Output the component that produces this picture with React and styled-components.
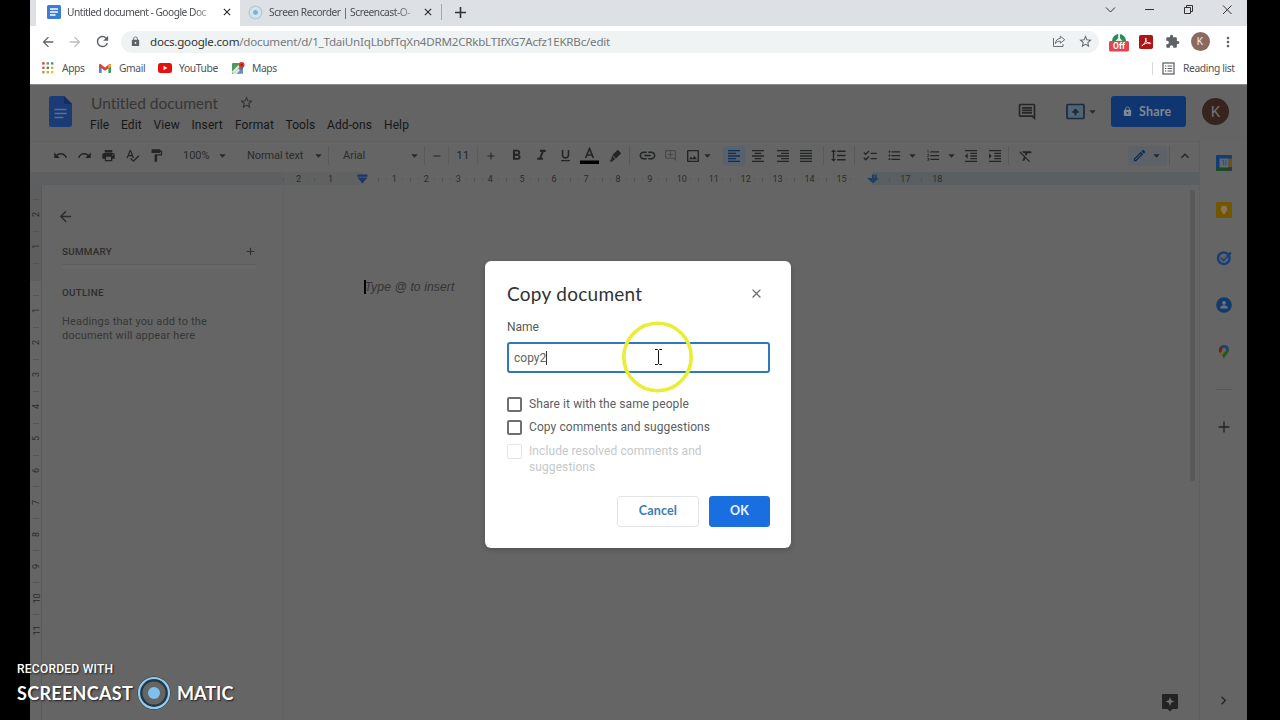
import React from "react"
import styled, { createGlobalStyle, css } from "styled-components"
import {
    MdUndo,
    MdRedo,
    MdPrint,
    MdSpellcheck,
    MdFormatPaint,
    MdRemove,
    MdAdd,
    MdFormatBold,
    MdFormatItalic,
    MdFormatUnderlined,
    MdLink,
    MdOutlineAddComment,
    MdOutlineImage,
    MdFormatAlignLeft,
    MdFormatAlignCenter,
    MdFormatAlignRight,
    MdFormatAlignJustify,
    MdFormatLineSpacing,
    MdChecklist,
    MdFormatListBulleted,
    MdFormatListNumbered,
    MdFormatIndentDecrease,
    MdFormatIndentIncrease,
    MdFormatClear,
    MdOutlineEdit,
    MdKeyboardArrowUp,
    MdChevronRight,
    MdOutlineComment,
    MdLock,
    MdStarBorder,
    MdArrowBack,
    MdArrowForward,
    MdRefresh,
    MdExtension,
    MdMoreVert,
    MdClose
} from "react-icons/md"

const GlobalStyle = createGlobalStyle`
    body {
        margin: 0;
        background: #000;
        overflow: hidden;
    }

    * {
        box-sizing: border-box;
    }

    svg {
        display: block;
        flex-shrink: 0;
    }
`

const Screen = styled.div`
    position: relative;
    width: 1280px;
    height: 720px;
    overflow: hidden;
    background: #000;
    padding-left: 30px;
    font-family: Roboto, sans-serif;
`

const Window = styled.div`
    width: 1217px;
    height: 720px;
    display: flex;
    flex-direction: column;
    background: #656565;
    white-space: nowrap;
`

// every bar is a run of these, icon or label in the middle
const Slot = styled.div`
    width: ${props => props.$w}px;
    height: 100%;
    padding-left: ${props => props.$pad || 0}px;
    flex-shrink: 0;
    display: flex;
    align-items: center;
    justify-content: center;
`

const Grow = styled.div`
    flex-grow: 1;
`

/* ---------- browser ---------- */

const TabStrip = styled.div`
    height: 26px;
    display: flex;
    background: #dde1e5;
    padding-left: 6px;
    color: #3c4043;
`

const Tab = styled.div`
    width: ${props => props.$w}px;
    height: 26px;
    padding-bottom: 2px;
    display: flex;
    align-items: center;
    ${props =>
        props.$active &&
        css`
            background: #fff;
        `};
`

const TabTitle = styled.div`
    width: 147px;
    font-family: "Noto Sans", sans-serif;
    font-size: 10.2px;
    line-height: 20px;
    letter-spacing: ${props => props.$spacing}px;
    color: #4a4d51;
    mask-image: linear-gradient(to right, #000 86%, rgba(0, 0, 0, 0.2));
`

const TabLine = styled.div`
    width: 1px;
    height: 16px;
    margin-top: 4px;
    background: #a5a9ae;
`

const NewTab = styled(Slot)`
    height: 24px;
`

const AddressBar = styled.div`
    height: 31px;
    display: flex;
    align-items: center;
    background: #fff;
    padding-left: 5px;
    color: #5f6368;
`

const Omnibox = styled.div`
    width: 979px;
    height: 22px;
    border-radius: 11px;
    background: #f0f3f3;
    display: flex;
    align-items: center;
    padding-left: 7px;
`

const Url = styled.div`
    flex-grow: 1;
    font-family: "Noto Sans", sans-serif;
    font-size: 11.6px;
    line-height: 20px;
    letter-spacing: -0.23px;
    color: #75797c;

    b {
        font-weight: 400;
        color: #303336;
    }
`

const BrowserAvatar = styled.div`
    width: 19px;
    height: 19px;
    flex-shrink: 0;
    border-radius: 50%;
    background: #8a6a60;
    color: #f0e6e2;
    font-size: 10px;
    line-height: 19px;
    text-align: center;
`

const BookmarkBar = styled.div`
    height: 27px;
    padding-bottom: 5px;
    display: flex;
    align-items: center;
    background: #fff;
    padding-left: 8px;
`

const BookmarkText = styled.div`
    width: ${props => props.$w}px;
    font-family: "Noto Sans", sans-serif;
    font-size: 10.3px;
    line-height: 20px;
    letter-spacing: -0.4px;
    color: #505357;
`

const BookmarkLine = styled.div`
    width: 1px;
    height: 13px;
    background: #d6d9dc;
`

/* ---------- docs ---------- */

const DocsHeader = styled.div`
    height: 57px;
    border-top: 1px solid #8b8b8b;
    display: flex;
    background: #646464;
    padding-left: 19px;
`

const LogoSlot = styled(Slot)`
    height: 53px;
`

const HeaderMain = styled.div`
    width: 900px;
    padding: 7px 0 0 18px;
`

const TitleRow = styled.div`
    display: flex;
    align-items: center;
    height: 22px;
    padding-bottom: 1px;
    color: #303030;
`

const DocTitle = styled.div`
    width: 149px;
    padding-left: 1px;
    font-family: Lato, sans-serif;
    font-size: 15.5px;
    letter-spacing: -0.03px;
    color: #363636;
`

const MenuRow = styled.div`
    display: flex;
    height: 22px;
    align-items: center;
`

const MenuItem = styled.div`
    width: ${props => props.$w}px;
    font-size: 12px;
    letter-spacing: 0.1px;
    color: #161616;
`

const HeaderActions = styled.div`
    display: flex;
    align-items: center;
    height: 53px;
    color: #242628;
`

const ShareButton = styled.div`
    width: 75px;
    height: 31px;
    margin: 0 16px 0 17px;
    border-radius: 3px;
    background: #103672;
    color: #81878f;
    display: flex;
    align-items: center;
    padding: 0 0 1px 11px;
    gap: 6px;
    font-family: Lato, sans-serif;
    font-weight: 700;
    font-size: 12.5px;
    letter-spacing: 0.2px;
`

const Avatar = styled.div`
    width: 27px;
    height: 27px;
    border-radius: 50%;
    background: #35241f;
    color: #77706d;
    font-size: 15px;
    line-height: 28px;
    text-align: center;
`

const Lower = styled.div`
    flex-grow: 1;
    display: flex;
`

const Workspace = styled.div`
    width: 1169px;
    display: flex;
    flex-direction: column;
`

const Toolbar = styled.div`
    height: 31px;
    display: flex;
    align-items: center;
    border-top: 1px solid #5e5e5e;
    padding: 0 0 3px 18px;
    color: #232425;
`

const ToolText = styled.div`
    width: ${props => props.$w}px;
    padding-left: ${props => props.$pad}px;
    flex-shrink: 0;
    font-size: 11px;
    letter-spacing: ${props => props.$spacing || 0}px;
    color: #2a2b2c;
`

const ToolLine = styled.div`
    width: 1px;
    height: 19px;
    margin-right: 1px;
    flex-shrink: 0;
    background: #595959;
`

const FontSize = styled(Slot)`
    height: 19px;
    font-size: 11px;
    border: 1px solid #5c5c5c;
    border-width: 0 1px;
    letter-spacing: 0.4px;
`

const SelectedSlot = styled(Slot)`
    height: 20px;
    border-radius: 2px;
    background: #59616c;
    color: #0b2c58;
`

const EditMode = styled.div`
    width: 39px;
    height: 20px;
    border-radius: 2px;
    background: #5d6268;
    display: flex;
    color: #0b2c58;
`

const Ruler = styled.div`
    height: 13px;
    display: flex;
    background: linear-gradient(
        to right,
        #5d5f60 252px,
        #606161 252px,
        #606161 332px,
        #656565 332px,
        #656565 843px,
        #5a6061 843px
    );
    padding-left: 252.5px;
`

const RulerCell = styled.div`
    width: 31.95px;
    height: 13px;
    display: flex;
    align-items: center;
    justify-content: center;
    font-size: 9px;
    color: #2b2b2b;
    background: linear-gradient(#505050, #505050) 0 6px / 1px 3px no-repeat,
        linear-gradient(#5a5a5a, #5a5a5a) 8px 6px / 1px 2px no-repeat,
        linear-gradient(#5a5a5a, #5a5a5a) 24px 6px / 1px 2px no-repeat;
`

const Marker = styled.div`
    width: 32px;
    height: 13px;
    display: flex;
    align-items: center;
    justify-content: center;
`

const Body = styled.div`
    flex-grow: 1;
    height: 535px;
    display: flex;
`

const SideRuler = styled.div`
    width: 12px;
    height: 535px;
    overflow: hidden;
    padding-top: 14px;
    border-right: 1px solid #595959;
    background: linear-gradient(#5e5e5e 96px, #656565 96px);
`

const SideRulerCell = styled.div`
    width: 11px;
    height: 31.95px;
    padding-left: 3px;
    display: flex;
    align-items: center;
    justify-content: center;
    font-size: 9px;
    line-height: 9px;
    color: #2b2b2b;
    background: linear-gradient(#555, #555) 3px 0 / 6px 1px no-repeat;

    span {
        transform: rotate(-90deg);
    }
`

const Outline = styled.div`
    width: 242px;
    border-right: 1px solid #616161;
    padding: 23px 0 0 20px;
    color: #2c2c2c;
`

const BackArrow = styled.div`
    height: 18px;
    margin-left: -5px;
`

const OutlineHead = styled.div`
    width: 195px;
    height: 20px;
    margin-top: ${props => props.$top}px;
    display: flex;
    align-items: center;
    justify-content: space-between;
    font-weight: 500;
    font-size: 9.8px;
    letter-spacing: 0.3px;
    color: #2d2d2d;
`

const OutlineLine = styled.div`
    width: 194px;
    height: 5px;
    margin-top: 3px;
    border-top: 1px solid #5d5d5d;
    background: #686868;
`

const OutlineText = styled.div`
    margin-top: 13px;
    font-size: 11px;
    line-height: 14.3px;
    letter-spacing: 0.16px;
    color: #373737;
`

const Paper = styled.div`
    width: 906px;
    padding: 95px 0 0 80px;
    display: flex;
`

const Caret = styled.div`
    width: 1.5px;
    height: 14px;
    margin-right: -1px;
    background: #000;
`

const Hint = styled.div`
    height: 15px;
    font-family: "Liberation Sans", sans-serif;
    font-style: italic;
    font-size: 12.2px;
    line-height: 15px;
    letter-spacing: 0.08px;
    color: #343434;
`

const Scroller = styled.div`
    width: 9px;
    padding-top: 5px;
`

const ScrollThumb = styled.div`
    width: 5px;
    height: 291px;
    border-radius: 2px;
    background: #595959;
`

const SidePanel = styled.div`
    width: 48px;
    border-left: 1px solid #5e5e5e;
    padding-top: 10px;
    background: #656565;
    display: flex;
    flex-direction: column;
    align-items: center;
    color: #262626;
`

const PanelIcon = styled.div`
    height: ${props => props.$h || 47.3}px;
    padding-top: 4px;
`

const PanelLine = styled.div`
    width: 16px;
    height: 1px;
    margin-top: 2px;
    background: #575757;
`

const PanelFoot = styled.div`
    margin-top: auto;
    height: 28px;
`

/* ---------- dialog ---------- */

const Dialog = styled.div`
    position: absolute;
    left: 485px;
    top: 261px;
    width: 306px;
    height: 287px;
    border-radius: 6px;
    background: #fff;
    box-shadow: 0 2px 5px rgba(0, 0, 0, 0.2);
    padding: 20px 21px 20px 22px;
    color: #45484c;
`

const DialogHead = styled.div`
    height: 25px;
    display: flex;
    align-items: center;
    justify-content: space-between;
    padding-right: 6px;
    color: #6a6e72;
`

const DialogTitle = styled.div`
    font-family: Lato, sans-serif;
    font-size: 19px;
    letter-spacing: 0.27px;
    color: #303236;
`

const Label = styled.div`
    margin-top: 13px;
    font-size: 12px;
    line-height: 16px;
    letter-spacing: 0;
    color: #55585c;
`

const Field = styled.div`
    height: 31px;
    margin-top: 7px;
    border: 2px solid #2f78bd;
    border-radius: 3px;
    display: flex;
    align-items: center;
    padding-left: 5px;
    font-size: 12px;
    color: #606367;
`

const FieldCaret = styled.div`
    width: 1px;
    height: 14px;
    background: #333;
`

const Checks = styled.div`
    margin-top: 23px;
`

const CheckRow = styled.div`
    display: flex;
    gap: 7px;
    min-height: 23.3px;
    font-size: 12px;
    line-height: 16px;
    letter-spacing: 0.09px;
    color: ${props => (props.$off ? "#c6c8ca" : "#5b5e62")};
`

const Box = styled.div`
    width: 15px;
    height: 15px;
    margin-top: 1px;
    flex-shrink: 0;
    border-radius: 2px;
    border: ${props =>
        props.$off ? "1px solid #e4e5e7" : "2px solid #6d7175"};
`

const DialogButtons = styled.div`
    display: flex;
    justify-content: flex-end;
    gap: 10px;
    margin-top: 21px;
`

const DialogButton = styled.div`
    width: ${props => props.$w}px;
    height: 31px;
    border-radius: 3px;
    display: flex;
    align-items: center;
    justify-content: center;
    padding-bottom: 1px;
    font-family: Lato, sans-serif;
    font-weight: 700;
    font-size: 12.5px;
    letter-spacing: 0.15px;
    border: 1px solid ${props => (props.$primary ? "#1a6fe0" : "#e2e4e7")};
    background: ${props => (props.$primary ? "#1a6fe0" : "#fff")};
    color: ${props => (props.$primary ? "#eef5ff" : "#3b7cae")};
`

/* ---------- recorder overlays ---------- */

const Pointer = styled.div`
    position: absolute;
    left: 620px;
    top: 320px;
`

const Watermark = styled.div`
    position: absolute;
    left: 17px;
    top: 661px;
    color: #fff;
    white-space: nowrap;
    text-shadow: 1px 1px 2px rgba(0, 0, 0, 0.75);
`

const WatermarkSmall = styled.div`
    font-size: 12px;
    font-weight: 500;
    line-height: 16px;
    letter-spacing: 0.25px;
`

const WatermarkBrand = styled.div`
    height: 32px;
    display: flex;
    align-items: center;
    font-family: Lato, sans-serif;
    font-weight: 700;
    font-size: 18px;
`

const BrandWord = styled.div`
    width: ${props => props.$w}px;
    padding-left: ${props => props.$pad || 0}px;
    letter-spacing: ${props => props.$spacing}px;
`

const DropDown = ({ w }) => (
    <Slot $w={w}>
        <svg width="7" height="4" viewBox="0 0 7 4">
            <path d="M0.3 0.3h6.4L3.5 3.7z" fill="#27282a" />
        </svg>
    </Slot>
)

const DocTabIcon = () => (
    <svg width="14" height="14" viewBox="0 0 14 14">
        <rect width="14" height="14" rx="1.5" fill="#3c7cd8" />
        <path d="M3 4h8M3 7h8M3 10h5.5" stroke="#fff" strokeWidth="1.4" />
    </svg>
)

const RecorderTabIcon = () => (
    <svg width="15" height="15" viewBox="0 0 15 15">
        <circle cx="7.5" cy="7.5" r="6.3" fill="none" stroke="#a9cde0" strokeWidth="1.3" />
        <circle cx="7.5" cy="7.5" r="2.4" fill="#72b4d8" />
    </svg>
)

const ShareArrow = () => (
    <svg width="14" height="13" viewBox="0 0 14 13" fill="none" stroke="#6a6e72">
        <path d="M1.500 3v8.500h9.500v-2.500" />
        <path d="M8.300 1.200l4.400 3.500-4.400 3.500v-2c-2.200 0-3.800.5-5 2.400.4-3 2-4.900 5-5.300z" />
    </svg>
)

const OffExtension = () => (
    <svg width="22" height="20" viewBox="0 0 22 20">
        <path d="M4 9a7 7 0 0 1 14 0z" fill="#2f8a5a" />
        <path d="M7.500 9l3.500-4 3.500 4z" fill="#d9efe2" />
        <path d="M10.200 2h1.800v6h-1.800z" fill="#e9f6ee" />
        <rect x="1" y="9" width="20" height="10.500" rx="1.500" fill="#e2454f" />
        <text
            x="11"
            y="17.4"
            textAnchor="middle"
            fill="#fff"
            fontSize="8.5"
            fontWeight="700"
            fontFamily="Roboto, sans-serif"
        >
            Off
        </text>
    </svg>
)

const PdfExtension = () => (
    <svg width="14" height="14" viewBox="0 0 14 14">
        <rect width="14" height="14" rx="1.8" fill="#b01515" />
        <path
            d="M2.800 10.800c2-1 4.600-4.200 4.300-7.400c-.5-1-1 .3-.3 2c.8 2 2.300 3.300 4.500 3.300c.8-.3.2-1-1-1c-2.500 0-5 1-7.500 3.100z"
            fill="none"
            stroke="#fff"
            strokeWidth="1"
        />
    </svg>
)

const AppsIcon = () => {
    const colors = ["#d93f35", "#5c9a5f", "#4a80c8", "#dc5c48", "#5a8f50", "#d8b23e", "#8cae3f", "#d8a838", "#e0c23e"]
    return (
        <svg width="12" height="12" viewBox="0 0 12 12">
            {colors.map((c, i) => (
                <rect key={i} x={(i % 3) * 4.4 + 0.2} y={Math.floor(i / 3) * 4.4 + 0.2} width="2.4" height="2.4" fill={c} />
            ))}
        </svg>
    )
}

const GmailIcon = () => (
    <svg width="12" height="9" viewBox="0 0 12 9">
        <path d="M0 1h2.600v8H.8A.8.800 0 0 1 0 8.200z" fill="#4a80d8" />
        <path d="M9.400 1H12v7.200a.8.800 0 0 1-.8.800H9.400z" fill="#3c9a56" />
        <path d="M0 1.200C0 0 1.300-.3 2.200.5L6 3.400 9.800.5C10.700-.3 12 0 12 1.200L11.900 2.500 6 6.800.1 2.500z" fill="#dc4436" />
        <path d="M9.400.8c1-.9 2.600-.6 2.600.6v1.200L9.400 4.500z" fill="#e8b23a" />
    </svg>
)

const YouTubeIcon = () => (
    <svg width="14" height="10" viewBox="0 0 14 10">
        <rect width="14" height="10" rx="2.5" fill="#e8100c" />
        <path d="M5.500 2.800L9.300 5 5.500 7.200z" fill="#fff" />
    </svg>
)

const MapsIcon = () => (
    <svg width="13" height="12" viewBox="0 0 13 12">
        <rect y="1" width="11" height="11" rx="1" fill="#4b9c5c" />
        <path d="M1 12l5-5.500 5 5V12z" fill="#dfe5ea" />
        <path d="M4.500 12L11 5v6.500z" fill="#5b8fd6" />
        <path d="M0 9.500L8 1.500 9.500 3 1 11.800z" fill="#f0e9d8" />
        <path d="M9.600 0a3 3 0 0 1 3 3c0 2-2.200 2.700-3 5.200C8.800 5.700 6.600 5 6.600 3a3 3 0 0 1 3-3z" fill="#d5392f" />
        <circle cx="9.6" cy="3" r="1" fill="#8a1a16" />
    </svg>
)

const ReadingListIcon = () => (
    <svg width="13" height="13" viewBox="0 0 13 13" fill="none" stroke="#55585c">
        <rect x="1" y="1" width="11" height="11" strokeWidth="1.2" />
        <path d="M3 4h1.300M3 6.500h1.300M3 9h1.300M5.500 4h4.700M5.500 6.500h4.700M5.500 9h4.700" strokeWidth="1.2" />
    </svg>
)

const DocsLogo = () => (
    <svg width="23" height="31" viewBox="0 0 23 31">
        <path d="M2.200 0H15l8 8v20.800a2.200 2.200 0 0 1-2.200 2.200H2.200A2.200 2.200 0 0 1 0 28.800V2.200A2.200 2.200 0 0 1 2.200 0z" fill="#1b3b76" />
        <path d="M15 0l8 8h-6a2 2 0 0 1-2-2z" fill="#152d5c" />
        <path d="M5.500 13.500h12M5.500 17.500h12M5.500 21.500h9" stroke="#5b6f90" strokeWidth="1.5" />
    </svg>
)

const PresentIcon = () => (
    <svg width="19" height="17" viewBox="0 0 19 17">
        <rect x="1" y="1.5" width="17" height="14" rx="1" fill="#536471" stroke="#182b44" strokeWidth="1.7" />
        <path d="M9.500 12.500v-6M6.500 9h6" fill="none" stroke="#182b44" strokeWidth="1.9" />
        <path d="M6.500 8.500l3-3 3 3z" fill="#182b44" />
    </svg>
)

const TextColorIcon = () => (
    <svg width="19" height="18" viewBox="0 0 19 18">
        <path d="M5.600 11L9.500 1.500 13.400 11M7 8h5" fill="none" stroke="#232425" strokeWidth="1.6" />
        <rect y="13.5" width="19" height="3.5" fill="#000" />
    </svg>
)

const HighlightIcon = () => (
    <svg width="13" height="13" viewBox="0 0 13 13">
        <path d="M8.800.8l3.400 3.400L7 9.600 3.400 6z" fill="#232425" />
        <path d="M3 6.800l3.200 3.200-1.600 1.300-1 1.200H.5l1.800-2.100z" fill="#232425" />
    </svg>
)

const IndentMarker = () => (
    <svg width="11" height="10" viewBox="0 0 11 10">
        <path d="M.5.5h10v2.200H.5zM.5 3.400h10L5.500 9.500z" fill="#1c3767" />
    </svg>
)

const RightMarker = () => (
    <svg width="12" height="11" viewBox="0 0 12 11">
        <path d="M0 5h12L6 10.500z" fill="#1c3f67" />
        <path d="M5 1.500l2.500-.5v5H4.800zM8 2.500l2-1.300v4H8z" fill="#24405c" />
    </svg>
)

const CalendarIcon = () => (
    <svg width="16" height="16" viewBox="0 0 16 16">
        <rect width="16" height="16" rx="1" fill="#153c73" />
        <path d="M12.500 3.500H16V12h-3.500z" fill="#69550c" />
        <path d="M0 12.500h12.500V16H1a1 1 0 0 1-1-1z" fill="#164a28" />
        <path d="M12.500 12.500H16L12.500 16z" fill="#6b2417" />
        <rect x="3.5" y="3.5" width="9" height="9" fill="#61676e" />
        <path d="M6 5.500h1.500v5M9.800 5.200v5.300" fill="none" stroke="#2b5286" />
    </svg>
)

const KeepIcon = () => (
    <svg width="16" height="16" viewBox="0 0 16 16">
        <rect width="16" height="16" rx="1" fill="#725700" />
        <circle cx="8" cy="7" r="3.2" fill="#82755a" />
        <rect x="6.5" y="9.5" width="3" height="2.5" fill="#82755a" />
    </svg>
)

const TasksIcon = () => (
    <svg width="16" height="16" viewBox="0 0 16 16" fill="none">
        <circle cx="7.8" cy="8.3" r="5.8" stroke="#183e78" strokeWidth="2.4" />
        <path d="M5 7.500l2.500 2.600L15 2.500" stroke="#183e78" strokeWidth="2.2" />
        <path d="M5 6.500l2.600 2.600 3-3" stroke="#5e6a7a" strokeWidth="1" />
    </svg>
)

const ContactsIcon = () => (
    <svg width="16" height="16" viewBox="0 0 16 16">
        <circle cx="8" cy="8" r="7.8" fill="#143a6b" />
        <circle cx="8" cy="5.8" r="1.9" fill="#68717c" />
        <path d="M4 11.500c0-2.300 2-3.200 4-3.200s4 .9 4 3.200z" fill="#68717c" />
    </svg>
)

const MapPinIcon = () => (
    <svg width="12" height="16" viewBox="0 0 12 16">
        <path d="M6 1a5 5 0 0 1 5 5c0 3.500-4 5-5 9-1-4-5-5.500-5-9a5 5 0 0 1 5-5z" fill="#1d5730" />
        <path d="M6 1a5 5 0 0 1 4.700 3.300L7 8 3 2.200A5 5 0 0 1 6 1z" fill="#20427a" />
        <path d="M3 2.200L6 6 2 9C.5 7 .3 4 3 2.200z" fill="#672720" />
        <path d="M2 9l2.500-2.500L7 8l-3 3.500z" fill="#796117" />
        <circle cx="6" cy="6" r="1.9" fill="#686868" />
    </svg>
)

const ExploreIcon = () => (
    <svg width="16" height="18" viewBox="0 0 16 18">
        <path d="M1 0h14a1 1 0 0 1 1 1v13a1 1 0 0 1-1 1h-4.500L8 17.500 5.500 15H1a1 1 0 0 1-1-1V1a1 1 0 0 1 1-1z" fill="#242424" />
        <path d="M8 3l1.200 3.300L12.500 7.500 9.200 8.700 8 12 6.800 8.700 3.500 7.500l3.300-1.200z" fill="#707070" />
    </svg>
)

const ExploreButton = styled.div`
    position: absolute;
    left: 1162px;
    top: 694px;
`

const menus = [
    ["File", 31],
    ["Edit", 32.5],
    ["View", 38],
    ["Insert", 43.5],
    ["Format", 50.5],
    ["Tools", 41.5],
    ["Add-ons", 57],
    ["Help", 30]
]

const range = n => Array.from({ length: n }, (_, i) => i + 1)

const Browser = () => (
    <>
        <TabStrip>
            <Tab $active $w={204}>
                <Slot $w={31} $pad={4}>
                    <DocTabIcon />
                </Slot>
                <TabTitle $spacing={-0.5}>Untitled document - Google Doc</TabTitle>
                <Slot $w={25}>
                    <MdClose size={12} color="#222" />
                </Slot>
            </Tab>
            <Tab $w={201}>
                <Slot $w={29} $pad={2}>
                    <RecorderTabIcon />
                </Slot>
                <TabTitle $spacing={-0.45}>Screen Recorder | Screencast-O-</TabTitle>
                <Slot $w={24}>
                    <MdClose size={12} color="#222" />
                </Slot>
            </Tab>
            <TabLine />
            <NewTab $w={37}>
                <svg width="11" height="11" viewBox="0 0 11 11" stroke="#303236" strokeWidth="1.6">
                    <path d="M5.500 0v11M0 5.500h11" />
                </svg>
            </NewTab>
            <Grow />
            <svg width="157" height="20" viewBox="0 0 157 20" fill="none" stroke="#333">
                <path d="M16 7.500l4.500 4.500L25 7.500" />
                <path d="M55 9.500h9" />
                <path d="M94.500 7.500h6v6h-6zM96.500 7.500v-2h6v6h-2" />
                <path d="M133 5.500l8.500 8.500M141.500 5.500L133 14" />
            </svg>
        </TabStrip>
        <AddressBar>
            <Slot $w={26}>
                <MdArrowBack size={16} />
            </Slot>
            <Slot $w={28}>
                <MdArrowForward size={16} color="#bbbec1" />
            </Slot>
            <Slot $w={27}>
                <MdRefresh size={17} />
            </Slot>
            <Slot $w={5} />
            <Omnibox>
                <Slot $w={14}>
                    <MdLock size={11} />
                </Slot>
                <Slot $w={8} />
                <Url>
                    <b>docs.google.com</b>/document/d/1_TdaiUnIqLbbfTqXn4DRM2CRkbLTIfXG7Acfz1EKRBc/edit
                </Url>
                <Slot $w={27}>
                    <ShareArrow />
                </Slot>
                <Slot $w={27}>
                    <MdStarBorder size={15} />
                </Slot>
            </Omnibox>
            <Slot $w={39}>
                <OffExtension />
            </Slot>
            <Slot $w={15}>
                <PdfExtension />
            </Slot>
            <Slot $w={39}>
                <MdExtension size={15} />
            </Slot>
            <Slot $w={16}>
                <BrowserAvatar>K</BrowserAvatar>
            </Slot>
            <Slot $w={39}>
                <MdMoreVert size={16} />
            </Slot>
        </AddressBar>
        <BookmarkBar>
            <Slot $w={20}>
                <AppsIcon />
            </Slot>
            <Slot $w={4} />
            <BookmarkText $w={33}>Apps</BookmarkText>
            <Slot $w={20}>
                <GmailIcon />
            </Slot>
            <Slot $w={4} />
            <BookmarkText $w={36}>Gmail</BookmarkText>
            <Slot $w={20}>
                <YouTubeIcon />
            </Slot>
            <Slot $w={4} />
            <BookmarkText $w={49}>YouTube</BookmarkText>
            <Slot $w={20}>
                <MapsIcon />
            </Slot>
            <Slot $w={4} />
            <BookmarkText $w={33}>Maps</BookmarkText>
            <Grow />
            <BookmarkLine />
            <Slot $w={30}>
                <ReadingListIcon />
            </Slot>
            <BookmarkText $w={64}>Reading list</BookmarkText>
        </BookmarkBar>
    </>
)

const Header = () => (
    <DocsHeader>
        <LogoSlot $w={23}>
            <DocsLogo />
        </LogoSlot>
        <HeaderMain>
            <TitleRow>
                <DocTitle>Untitled document</DocTitle>
                <MdStarBorder size={15} />
            </TitleRow>
            <MenuRow>
                {menus.map(([name, w]) => (
                    <MenuItem key={name} $w={w}>
                        {name}
                    </MenuItem>
                ))}
            </MenuRow>
        </HeaderMain>
        <Grow />
        <HeaderActions>
            <Slot $w={66}>
                <MdOutlineComment size={20} />
            </Slot>
            <Slot $w={30}>
                <PresentIcon />
            </Slot>
            <DropDown w={4} />
            <ShareButton>
                <MdLock size={11} />
                Share
            </ShareButton>
            <Avatar>K</Avatar>
            <Slot $w={18} />
        </HeaderActions>
    </DocsHeader>
)

const Tools = () => (
    <Toolbar>
        {[MdUndo, MdRedo, MdPrint, MdSpellcheck, MdFormatPaint].map((Icon, i) => (
            <Slot key={i} $w={24}>
                <Icon size={15} />
            </Slot>
        ))}
        <ToolText $w={44} $pad={15}>100%</ToolText>
        <DropDown w={20} />
        <ToolText $w={76} $pad={15} $spacing={-0.1}>Normal text</ToolText>
        <DropDown w={20} />
        <ToolLine />
        <ToolText $w={74} $pad={13}>Arial</ToolText>
        <DropDown w={20} />
        <ToolLine />
        <Slot $w={22}><MdRemove size={12} /></Slot>
        <FontSize $w={30}>11</FontSize>
        <Slot $w={26}><MdAdd size={12} /></Slot>
        <Slot $w={25}><MdFormatBold size={17} /></Slot>
        <Slot $w={24}><MdFormatItalic size={17} /></Slot>
        <Slot $w={24}><MdFormatUnderlined size={15} /></Slot>
        <Slot $w={24}><TextColorIcon /></Slot>
        <Slot $w={28}><HighlightIcon /></Slot>
        <ToolLine />
        <Slot $w={32}><MdLink size={19} /></Slot>
        <Slot $w={14}><MdOutlineAddComment size={13} color="#484848" /></Slot>
        <Slot $w={7} />
        <Slot $w={18}><MdOutlineImage size={16} /></Slot>
        <DropDown w={10} />
        <Slot $w={11} />
        <SelectedSlot $w={22}><MdFormatAlignLeft size={16} /></SelectedSlot>
        <Slot $w={26}><MdFormatAlignCenter size={16} /></Slot>
        <Slot $w={23}><MdFormatAlignRight size={16} /></Slot>
        <Slot $w={24}><MdFormatAlignJustify size={16} /></Slot>
        <Slot $w={5} />
        <ToolLine />
        <Slot $w={26}><MdFormatLineSpacing size={17} /></Slot>
        <Slot $w={3} />
        <ToolLine />
        <Slot $w={28}><MdChecklist size={16} /></Slot>
        <Slot $w={20}><MdFormatListBulleted size={15} /></Slot>
        <DropDown w={16} />
        <Slot $w={26}><MdFormatListNumbered size={15} /></Slot>
        <DropDown w={10} />
        <Slot $w={30}><MdFormatIndentDecrease size={16} /></Slot>
        <Slot $w={18}><MdFormatIndentIncrease size={16} /></Slot>
        <Slot $w={4} />
        <ToolLine />
        <Slot $w={32}><MdFormatClear size={16} /></Slot>
        <Grow />
        <EditMode>
            <Slot $w={22}><MdOutlineEdit size={15} /></Slot>
            <DropDown w={12} />
        </EditMode>
        <Slot $w={2} />
        <ToolLine />
        <Slot $w={28}><MdKeyboardArrowUp size={16} /></Slot>
    </Toolbar>
)

const Document = () => (
    <Workspace>
        <Tools />
        <Ruler>
            <RulerCell>2</RulerCell>
            <RulerCell>1</RulerCell>
            <Marker>
                <IndentMarker />
            </Marker>
            {range(18).map(n =>
                n === 16 ? (
                    <Marker key={n}>
                        <RightMarker />
                    </Marker>
                ) : (
                    <RulerCell key={n}>{n}</RulerCell>
                )
            )}
        </Ruler>
        <Body>
            <SideRuler>
                {[2, 1, "", ...range(11)].map((n, i) => (
                    <SideRulerCell key={i}>
                        <span>{n}</span>
                    </SideRulerCell>
                ))}
            </SideRuler>
            <Outline>
                <BackArrow>
                    <MdArrowBack size={17} />
                </BackArrow>
                <OutlineHead $top={15}>
                    SUMMARY
                    <MdAdd size={13} />
                </OutlineHead>
                <OutlineLine />
                <OutlineHead $top={13}>OUTLINE</OutlineHead>
                <OutlineText>
                    Headings that you add to the
                    <br />
                    document will appear here
                </OutlineText>
            </Outline>
            <Paper>
                <Caret />
                <Hint>Type @ to insert</Hint>
            </Paper>
            <Scroller>
                <ScrollThumb />
            </Scroller>
        </Body>
    </Workspace>
)

const Panel = () => (
    <SidePanel>
        {[CalendarIcon, KeepIcon, TasksIcon, ContactsIcon, MapPinIcon].map((Icon, i) => (
            <PanelIcon key={i}>
                <Icon />
            </PanelIcon>
        ))}
        <PanelLine />
        <PanelIcon $h={40}>
            <svg width="12" height="66" viewBox="0 0 12 66" stroke="#222" strokeWidth="1.3">
                <path d="M6 27.500v11M.5 33h11" />
            </svg>
        </PanelIcon>
        <PanelFoot>
            <MdChevronRight size={17} />
        </PanelFoot>
    </SidePanel>
)

const CopyDialog = () => (
    <Dialog>
        <DialogHead>
            <DialogTitle>Copy document</DialogTitle>
            <MdClose size={15} />
        </DialogHead>
        <Label>Name</Label>
        <Field>
            copy2
            <FieldCaret />
        </Field>
        <Checks>
            <CheckRow>
                <Box />
                Share it with the same people
            </CheckRow>
            <CheckRow>
                <Box />
                Copy comments and suggestions
            </CheckRow>
            <CheckRow $off>
                <Box $off />
                <div>
                    Include resolved comments and
                    <br />
                    suggestions
                </div>
            </CheckRow>
        </Checks>
        <DialogButtons>
            <DialogButton $w={82}>Cancel</DialogButton>
            <DialogButton $w={61} $primary>
                OK
            </DialogButton>
        </DialogButtons>
    </Dialog>
)

const App = () => (
    <Screen>
        <GlobalStyle />
        <Window>
            <Browser />
            <Header />
            <Lower>
                <Document />
                <Panel />
            </Lower>
        </Window>
        <ExploreButton>
            <ExploreIcon />
        </ExploreButton>
        <CopyDialog />
        <Pointer>
            <svg width="76" height="76" viewBox="0 0 76 76" fill="none">
                <circle cx="37.5" cy="37" r="33.7" stroke="#e9ee35" strokeWidth="3.6" />
                <path d="M35 29.500h2.500l1 1 1-1H42M35 44.500h2.500l1-1 1 1H42M38.500 30.500v13" stroke="#111" />
            </svg>
        </Pointer>
        <Watermark>
            <WatermarkSmall>RECORDED WITH</WatermarkSmall>
            <WatermarkBrand>
                <BrandWord $w={120} $spacing={0.3}>SCREENCAST</BrandWord>
                <svg width="34" height="34" viewBox="0 0 34 34" fill="none">
                    <circle cx="17" cy="17" r="14" stroke="#1d3a4c" strokeWidth="5" />
                    <circle cx="17" cy="17" r="15" stroke="#9cc9e6" strokeWidth="2.2" />
                    <circle cx="17" cy="17" r="6" fill="#7fc0ea" />
                </svg>
                <BrandWord $w={66} $pad={6} $spacing={0}>MATIC</BrandWord>
            </WatermarkBrand>
        </Watermark>
    </Screen>
)

export default App
